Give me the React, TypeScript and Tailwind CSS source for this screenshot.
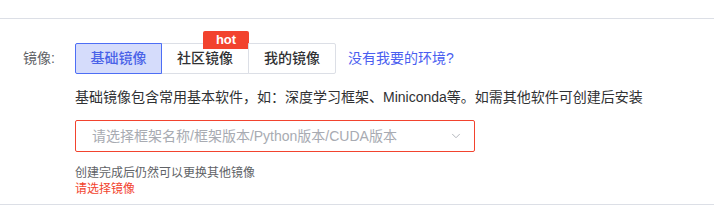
import { ChevronDown } from "lucide-react";

const font = { fontFamily: '"Liberation Sans", "Noto Sans CJK SC", sans-serif' };

export default function App() {
  const tabs = ["基础镜像", "社区镜像", "我的镜像"];
  const active = 0;

  return (
    <div className="w-[714px] h-[207px] bg-white pt-[18px]" style={font}>
      <div className="border-t border-b border-[#dcdfe6] h-[187px] pt-[24px] pl-[23px]">
        <div className="flex items-center h-[31px]">
          <span className="w-[52px] text-[14px] text-[#606266]">镜像:</span>
          <div className="flex">
            {tabs.map((t, i) => (
              <div
                key={t}
                className={`relative h-[31px] flex items-center justify-center text-[14px] font-medium border ${
                  i === active
                    ? "w-[87px] bg-[#d5dcfb] border-[#4d6ef5] text-[#4a63e8] rounded-l-[2px] z-10"
                    : "w-[88px] bg-white border-[#dcdfe6] text-[#303133] -ml-px"
                } ${i === tabs.length - 1 ? "rounded-r-[2px]" : ""}`}
              >
                {t}
                {i === 1 && (
                  <span className="absolute right-[-1px] top-[-13px] w-[46px] h-[18px] bg-[#f2432e] text-white text-[13px] font-bold leading-[18px] text-center rounded-t-[2px]">
                    hot
                  </span>
                )}
              </div>
            ))}
          </div>
          <a className="ml-[12px] text-[14px] text-[#4a5ef0] cursor-pointer">没有我要的环境?</a>
        </div>
        <div className="ml-[52px] mt-[13px] text-[14px] leading-[20px] text-[#303133]">
          基础镜像包含常用基本软件，如：深度学习框架、Miniconda等。如需其他软件可创建后安装
        </div>
        <div className="ml-[52px] mt-[13px] w-[400px] h-[32px] border border-[#f2432e] rounded-[2px] flex items-center justify-between pl-[16px] pr-[11px]">
          <span className="text-[14px] text-[#a8abb2]">请选择框架名称/框架版本/Python版本/CUDA版本</span>
          <ChevronDown className="w-[14px] h-[14px] text-[#a8abb2]" strokeWidth={1.5} />
        </div>
        <div className="ml-[52px] mt-[13px] text-[12px] leading-[16px] text-[#606266]">
          创建完成后仍然可以更换其他镜像
        </div>
        <div className="ml-[52px] text-[12px] leading-[16px] text-[#f2432e]">请选择镜像</div>
      </div>
    </div>
  );
}
